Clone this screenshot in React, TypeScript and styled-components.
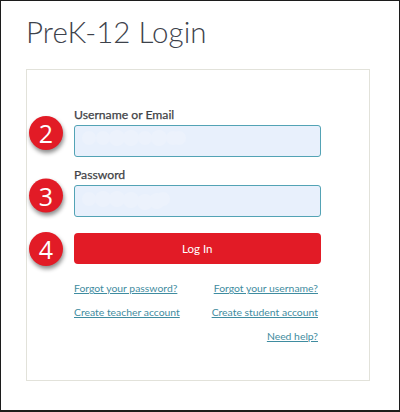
import React from "react";
import styled, { createGlobalStyle } from "styled-components";

const Global = createGlobalStyle`
  html, body { margin: 0; padding: 0; background: #fff; }
  body { font-family: "Lato", "Liberation Sans", sans-serif; }
`;

const Frame = styled.div`
  box-sizing: border-box;
  width: 400px;
  height: 412px;
  border: 1px solid #1c1c1c;
  border-bottom-width: 2px;
  padding: 14px 30px 0 25px;
  background: #fff;
`;

const Title = styled.h1`
  margin: 0;
  height: 54px;
  font-size: 29.5px;
  line-height: 33px;
  font-weight: 300;
  letter-spacing: 0.05px;
  color: #3d424b;
`;

const Card = styled.section`
  box-sizing: border-box;
  width: 344px;
  height: 312px;
  border: 1.5px solid #e2e2da;
  padding: 37px 48.5px 0 2px;
  display: flex;
  flex-direction: column;
`;

const Row = styled.div<{ $bottom: number }>`
  display: grid;
  grid-template-columns: 34px 1fr;
  column-gap: 11px;
  align-items: center;
  margin-bottom: ${(p) => p.$bottom}px;
`;

const Badge = styled.div<{ $offset: number }>`
  width: 34px;
  height: 34px;
  border-radius: 50%;
  background: #e21b26;
  color: #fff;
  font-size: 25px;
  line-height: 34px;
  text-align: center;
  font-family: "Open Sans", "Liberation Sans", sans-serif;
  box-shadow: 1px 3px 4px rgba(0, 0, 0, 0.45);
  transform: translateY(${(p) => p.$offset}px);
`;

const Field = styled.label`
  display: flex;
  flex-direction: column;
  gap: 2px;
`;

const LabelText = styled.span`
  font-size: 12.2px;
  line-height: 16px;
  font-weight: 400;
  color: #3f4246;
  -webkit-text-stroke: 0.25px #3f4246;
`;

const InputBox = styled.div`
  position: relative;
  box-sizing: border-box;
  height: 32px;
  border: 1.5px solid #53a3b5;
  border-radius: 3px;
  background: #e8f0fc;
`;

const Smudge = styled.svg`
  position: absolute;
  left: 6px;
  top: 2px;
`;

const Submit = styled.button`
  display: block;
  width: 100%;
  height: 31px;
  border: 0;
  border-radius: 4px;
  background: #e21b26;
  color: #fff;
  font-family: inherit;
  font-size: 11.5px;
  padding: 0;
`;

const Links = styled.div`
  margin: 15px 2.5px 0 45px;
  display: grid;
  grid-template-columns: 1fr auto;
  row-gap: 8px;
  column-gap: 10px;
`;

const TextLink = styled.a<{ $right?: boolean }>`
  font-size: 10.4px;
  line-height: 16px;
  color: #3f8ca0;
  text-decoration: underline;
  white-space: nowrap;
  ${(p) => (p.$right ? "text-align: right; grid-column: 2;" : "")}
`;

const blobs = (cs: number[][]) => (
  <Smudge width="110" height="26" viewBox="0 0 110 26" aria-hidden="true">
    {cs.map(([x, y, r], i) => (
      <circle key={i} cx={x} cy={y} r={r} fill="#ecf2fc" />
    ))}
  </Smudge>
);

export default function App() {
  return (
    <Frame>
      <Global />
      <Title>PreK-12 Login</Title>
      <Card>
        <Row $bottom={10}>
          <Badge $offset={1}>2</Badge>
          <Field>
            <LabelText>Username or Email</LabelText>
            <InputBox>
              {blobs([[8, 10, 7], [22, 10, 7], [36, 10, 8], [50, 10, 8], [64, 10, 7], [78, 10, 8], [92, 10, 7], [98, 10, 7]])}
            </InputBox>
          </Field>
        </Row>
        <Row $bottom={14}>
          <Badge $offset={3.5}>3</Badge>
          <Field>
            <LabelText>Password</LabelText>
            <InputBox>
              {blobs([[8, 11, 7], [22, 11, 8], [36, 11, 8], [50, 12, 8], [64, 14, 8], [76, 13, 8], [82, 11, 7]])}
            </InputBox>
          </Field>
        </Row>
        <Row $bottom={0}>
          <Badge $offset={1}>4</Badge>
          <Submit type="button">Log In</Submit>
        </Row>
        <Links>
          <TextLink href="#">Forgot your password?</TextLink>
          <TextLink href="#" $right>Forgot your username?</TextLink>
          <TextLink href="#">Create teacher account</TextLink>
          <TextLink href="#" $right>Create student account</TextLink>
          <TextLink href="#" $right>Need help?</TextLink>
        </Links>
      </Card>
    </Frame>
  );
}
